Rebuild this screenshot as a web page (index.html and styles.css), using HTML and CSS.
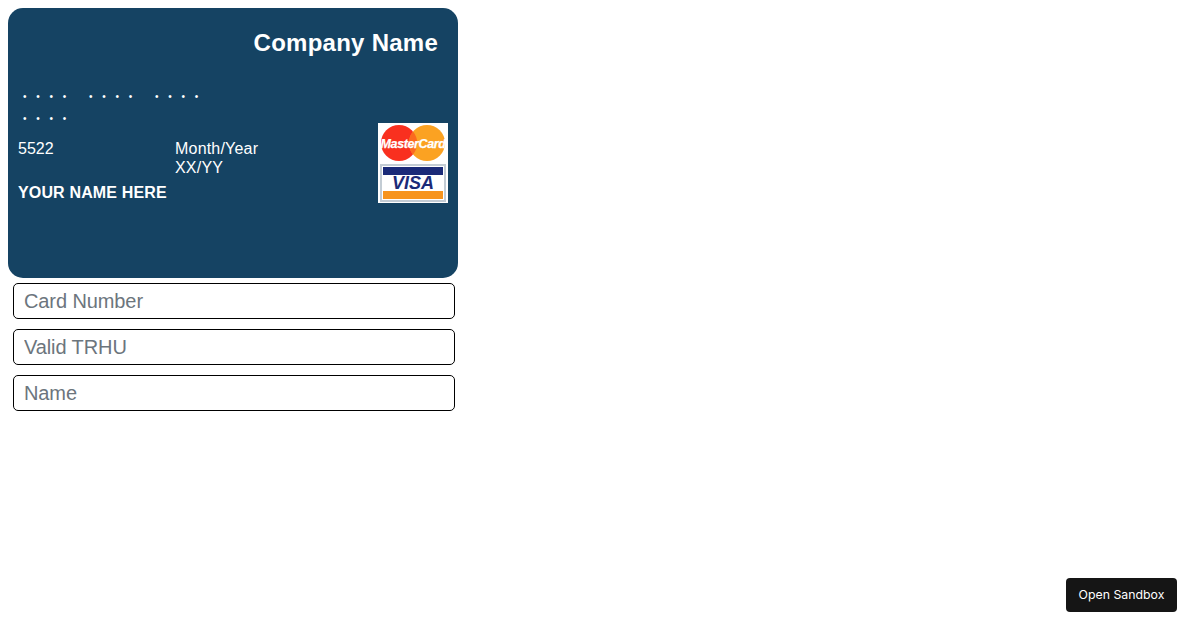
FILE: index.html
```html
<!DOCTYPE html>
<html lang="en">
<head>
  <meta charset="UTF-8">
  <title>Credit Card</title>
  <link rel="stylesheet" href="styles.css">
</head>
<body>
  <div class="card">
    <div class="company">Company Name</div>
    <div class="card-body">
      <div class="details">
        <div class="dots">•••• •••• •••• ••••</div>
        <div class="row">
          <div class="first-digits">5522</div>
          <div class="valid">Month/Year<br>XX/YY</div>
        </div>
        <div class="holder">YOUR NAME HERE</div>
      </div>
      <svg class="logos" viewBox="0 0 70 80" width="70" height="80">
        <rect width="70" height="80" fill="#fff"/>
        <circle cx="21" cy="20" r="18" fill="#f9301f"/>
        <circle cx="49" cy="20" r="18" fill="#fba222"/>
        <path d="M35 8.500a18 18 0 0 1 0 23a18 18 0 0 1 0-23z" fill="#fb6a1e"/>
        <text class="mc-text" x="35" y="24.500" text-anchor="middle">MasterCard</text>
        <rect x="3" y="42" width="64" height="36" fill="#fff" stroke="#c3ccd4" stroke-width="2"/>
        <rect x="5" y="44" width="60" height="8" fill="#1a2a78"/>
        <text class="visa-text" x="35" y="65.500" text-anchor="middle">VISA</text>
        <rect x="5" y="68" width="60" height="8" fill="#f7941d"/>
      </svg>
    </div>
  </div>

  <form class="card-form">
    <input type="text" placeholder="Card Number">
    <input type="text" placeholder="Valid TRHU">
    <input type="text" placeholder="Name">
  </form>

  <a class="sandbox" href="#">Open Sandbox</a>
</body>
</html>
```

FILE: styles.css
```css
body {
  margin: 8px;
  font-family: "Liberation Sans", Arial, sans-serif;
  background: #fff;
}
.card {
  box-sizing: border-box;
  width: 450px;
  height: 270px;
  padding: 17px 10px 10px;
  background: #154363;
  border-radius: 15px;
  color: #fff;
}
.company {
  padding-right: 10px;
  font-size: 24px;
  font-weight: bold;
  line-height: 36px;
  letter-spacing: 0.250px;
  text-align: right;
}
.card-body {
  display: flex;
  justify-content: space-between;
}
.details {
  width: 300px;
}
.dots {
  width: 200px;
  margin-top: 25px;
  padding-left: 5px;
  font-size: 10px;
  line-height: 22px;
  letter-spacing: 9.750px;
  word-spacing: 0.500px;
}
.row {
  display: flex;
  margin-top: 9px;
  font-size: 16px;
  line-height: 19px;
}
.first-digits {
  width: 157px;
}
.valid {
  letter-spacing: 0.200px;
}
.holder {
  margin-top: 6px;
  font-size: 16px;
  font-weight: bold;
  line-height: 19px;
  letter-spacing: 0.150px;
}
.logos {
  display: block;
  margin-top: 62px;
}
.mc-text {
  font-size: 12.500px;
  font-weight: bold;
  font-style: italic;
  letter-spacing: -0.400px;
  fill: #fff;
  stroke: #fff;
  stroke-width: 0.250px;
}
.visa-text {
  font-size: 18px;
  font-weight: bold;
  font-style: italic;
  fill: #1a2a78;
}
.card-form {
  display: flex;
  flex-direction: column;
  gap: 10px;
  width: 442px;
  margin: 5px 0 0 5px;
}
.card-form input {
  box-sizing: border-box;
  height: 36px;
  padding: 0 10px;
  border: 1px solid #000;
  border-radius: 5px;
  font-family: inherit;
  font-size: 20px;
  letter-spacing: -0.100px;
}
.card-form input::placeholder {
  color: #6c757d;
  opacity: 1;
}
.sandbox {
  position: fixed;
  right: 23px;
  bottom: 18px;
  box-sizing: border-box;
  width: 111px;
  height: 34px;
  background: #151515;
  border-radius: 4px;
  color: #fff;
  font-family: Inter, sans-serif;
  font-size: 12.300px;
  line-height: 34px;
  text-align: center;
  text-decoration: none;
}
```
